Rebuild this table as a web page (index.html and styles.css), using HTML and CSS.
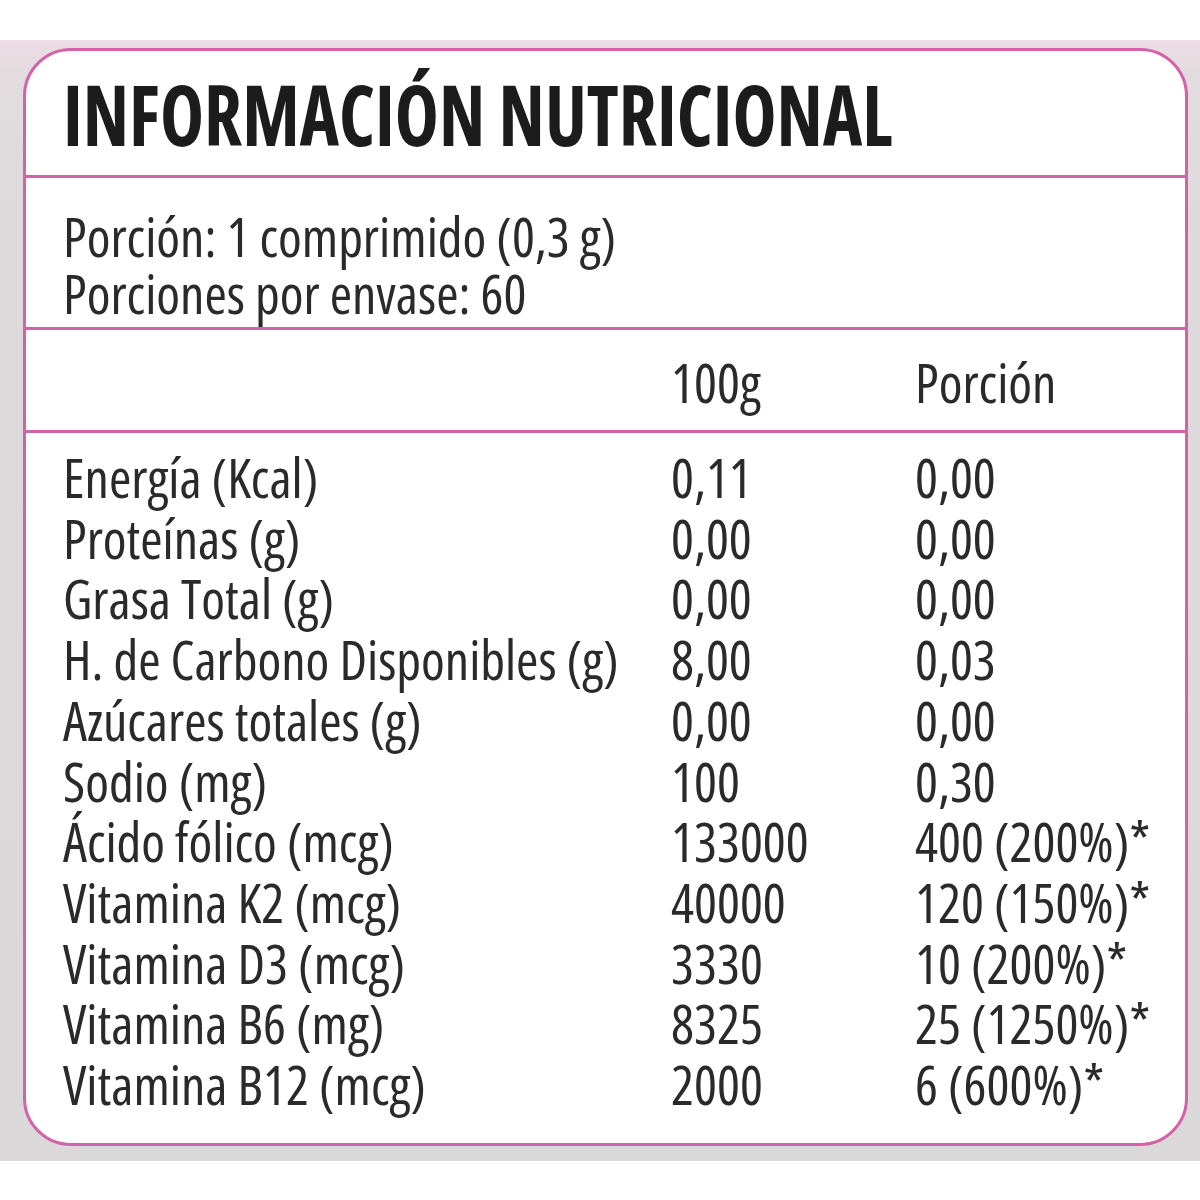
FILE: index.html
```html
<!DOCTYPE html>
<html lang="es">
<head>
<meta charset="utf-8">
<title>Información nutricional</title>
<link rel="stylesheet" href="styles.css">
</head>
<body>
<div class="stage">
  <div class="card">
    <div class="title-sec">
      <h1 class="title">INFORMACIÓN NUTRICIONAL</h1>
    </div>
    <div class="serving-sec">
      <div class="line">Porción: 1 comprimido (0,3 g)</div>
      <div class="line">Porciones por envase: 60</div>
    </div>
    <div class="head-sec grid">
      <div></div>
      <div>100g</div>
      <div>Porción</div>
    </div>
    <div class="rows-sec grid">
      <div>Energía (Kcal)</div><div>0,11</div><div>0,00</div>
      <div>Proteínas (g)</div><div>0,00</div><div>0,00</div>
      <div>Grasa Total (g)</div><div>0,00</div><div>0,00</div>
      <div>H. de Carbono Disponibles (g)</div><div>8,00</div><div>0,03</div>
      <div>Azúcares totales (g)</div><div>0,00</div><div>0,00</div>
      <div>Sodio (mg)</div><div>100</div><div>0,30</div>
      <div>Ácido fólico (mcg)</div><div>133000</div><div>400 (200%)*</div>
      <div>Vitamina K2 (mcg)</div><div>40000</div><div>120 (150%)*</div>
      <div>Vitamina D3 (mcg)</div><div>3330</div><div>10 (200%)*</div>
      <div>Vitamina B6 (mg)</div><div>8325</div><div>25 (1250%)*</div>
      <div>Vitamina B12 (mcg)</div><div>2000</div><div>6 (600%)*</div>
    </div>
  </div>
</div>
</body>
</html>
```
FILE: styles.css
```css
html, body {
  margin: 0;
  padding: 0;
  background: #ffffff;
}
body {
  font-family: "Open Sans", "Liberation Sans", sans-serif;
  font-stretch: 75%;
  font-weight: 480;
  color: #2a2a2a;
}
.stage {
  margin-top: 40px;
  padding: 8px 12px 15px 23px;
  background: linear-gradient(180deg, #eedde4 0px, #e2dcdf 30px, #dcdadb 200px, #dad8d9 100%);
}
.card {
  background: #ffffff;
  border: 3px solid #d462a8;
  border-radius: 48px;
  overflow: hidden;
}
.title-sec {
  padding: 21px 34px 19px 37px;
  border-bottom: 3px solid #d462a8;
}
.title {
  margin: 0;
  font-size: 84px;
  line-height: 84px;
  font-weight: 700;
  font-stretch: 75%;
  color: #1c1c1c;
  letter-spacing: 0;
  white-space: nowrap;
  transform: scaleX(0.887);
  transform-origin: left center;
}
.serving-sec {
  padding: 30px 34px 5px 37px;
  border-bottom: 3px solid #d462a8;
  font-size: 54px;
  line-height: 57px;
}
.line {
  white-space: nowrap;
}
.grid {
  display: grid;
  grid-template-columns: 608px 244px 1fr;
  font-size: 54px;
  line-height: 60.7px;
  white-space: nowrap;
  padding-left: 37px;
  padding-right: 20px;
}
.head-sec {
  line-height: 60px;
  padding-top: 22px;
  padding-bottom: 18px;
  border-bottom: 3px solid #d462a8;
}
.rows-sec {
  padding-top: 14px;
  padding-bottom: 28px;
}
```
